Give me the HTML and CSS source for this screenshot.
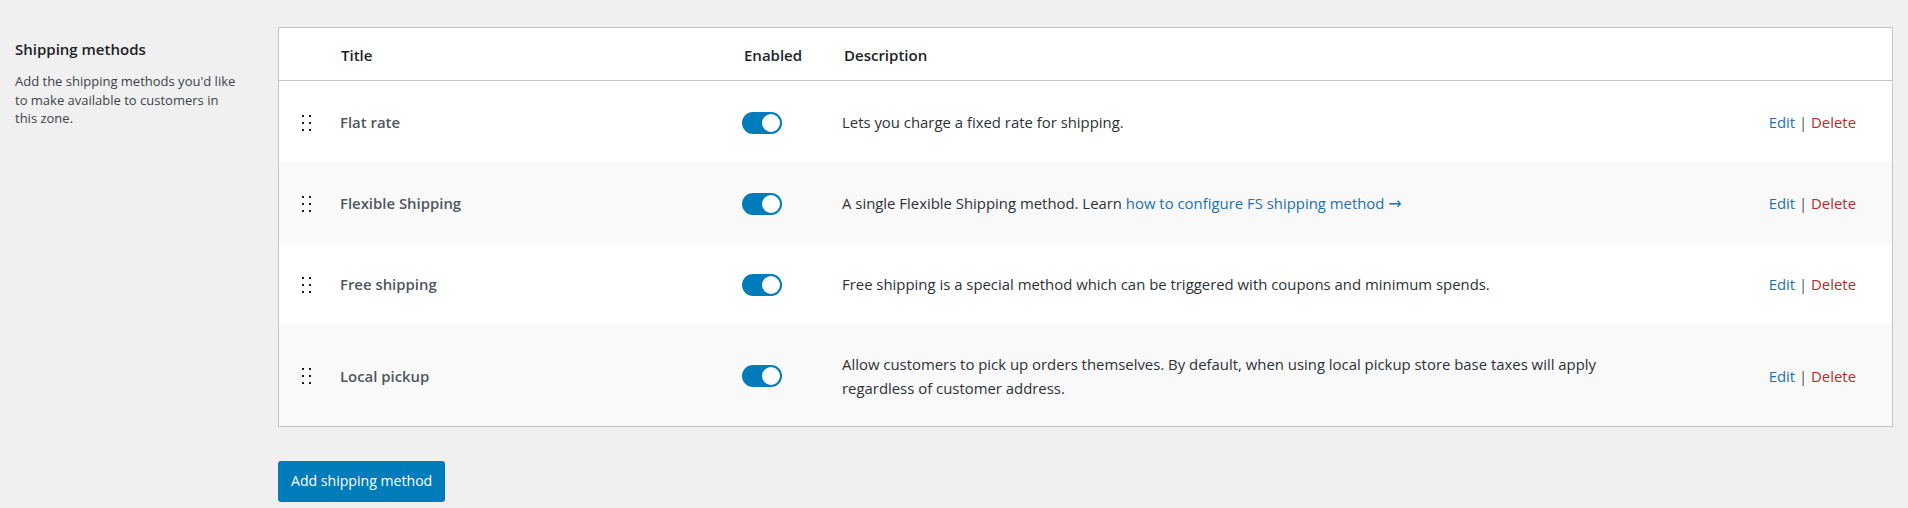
FILE: index.html
```html
<!DOCTYPE html>
<html lang="en">
<head>
<meta charset="utf-8">
<title>Shipping methods</title>
<link rel="stylesheet" href="styles.css">
</head>
<body>
<div class="page">
  <aside class="side">
    <h2 class="side-title">Shipping methods</h2>
    <p class="side-desc">Add the shipping methods you'd like to make available to customers in this zone.</p>
  </aside>
  <main class="content">
    <div class="methods">
      <div class="row head">
        <div class="c-handle"></div>
        <div class="c-title">Title</div>
        <div class="c-enabled">Enabled</div>
        <div class="c-desc">Description</div>
        <div class="c-actions"></div>
      </div>
      <div class="row">
        <div class="c-handle"><svg class="drag" width="9" height="16" viewBox="0 0 9 16"><rect x="0" y="0" width="2" height="2"/><rect x="7" y="0" width="2" height="2"/><rect x="0" y="7" width="2" height="2"/><rect x="7" y="7" width="2" height="2"/><rect x="0" y="14" width="2" height="2"/><rect x="7" y="14" width="2" height="2"/></svg></div>
        <div class="c-title">Flat rate</div>
        <div class="c-enabled"><span class="toggle"></span></div>
        <div class="c-desc">Lets you charge a fixed rate for shipping.</div>
        <div class="c-actions"><a class="edit" href="#">Edit</a> | <a class="delete" href="#">Delete</a></div>
      </div>
      <div class="row alt">
        <div class="c-handle"><svg class="drag" width="9" height="16" viewBox="0 0 9 16"><rect x="0" y="0" width="2" height="2"/><rect x="7" y="0" width="2" height="2"/><rect x="0" y="7" width="2" height="2"/><rect x="7" y="7" width="2" height="2"/><rect x="0" y="14" width="2" height="2"/><rect x="7" y="14" width="2" height="2"/></svg></div>
        <div class="c-title">Flexible Shipping</div>
        <div class="c-enabled"><span class="toggle"></span></div>
        <div class="c-desc">A single Flexible Shipping method. Learn <a class="link" href="#">how to configure FS shipping method <span class="arrow">→</span></a></div>
        <div class="c-actions"><a class="edit" href="#">Edit</a> | <a class="delete" href="#">Delete</a></div>
      </div>
      <div class="row">
        <div class="c-handle"><svg class="drag" width="9" height="16" viewBox="0 0 9 16"><rect x="0" y="0" width="2" height="2"/><rect x="7" y="0" width="2" height="2"/><rect x="0" y="7" width="2" height="2"/><rect x="7" y="7" width="2" height="2"/><rect x="0" y="14" width="2" height="2"/><rect x="7" y="14" width="2" height="2"/></svg></div>
        <div class="c-title">Free shipping</div>
        <div class="c-enabled"><span class="toggle"></span></div>
        <div class="c-desc">Free shipping is a special method which can be triggered with coupons and minimum spends.</div>
        <div class="c-actions"><a class="edit" href="#">Edit</a> | <a class="delete" href="#">Delete</a></div>
      </div>
      <div class="row alt">
        <div class="c-handle"><svg class="drag" width="9" height="16" viewBox="0 0 9 16"><rect x="0" y="0" width="2" height="2"/><rect x="7" y="0" width="2" height="2"/><rect x="0" y="7" width="2" height="2"/><rect x="7" y="7" width="2" height="2"/><rect x="0" y="14" width="2" height="2"/><rect x="7" y="14" width="2" height="2"/></svg></div>
        <div class="c-title">Local pickup</div>
        <div class="c-enabled"><span class="toggle"></span></div>
        <div class="c-desc">Allow customers to pick up orders themselves. By default, when using local pickup store base taxes will apply regardless of customer address.</div>
        <div class="c-actions"><a class="edit" href="#">Edit</a> | <a class="delete" href="#">Delete</a></div>
      </div>
    </div>
    <button class="add-btn" type="button">Add shipping method</button>
  </main>
</div>
</body>
</html>
```

FILE: styles.css
```css
* { box-sizing: border-box; }

html, body {
  margin: 0;
  padding: 0;
  background: #f0f0f0;
  font-family: "Open Sans", "Noto Sans", sans-serif;
  color: #1d2327;
}

.page {
  display: flex;
  padding: 27px 15px 0 15px;
  min-height: 508px;
}

.side {
  width: 263px;
  flex: none;
}

.side-title {
  margin: 11.5px 0 0 0;
  font-size: 15px;
  line-height: 20px;
  font-weight: 600;
  color: #1d2327;
}

.side-desc {
  margin: 13.5px 0 0 0;
  width: 223px;
  font-size: 13px;
  line-height: 18.7px;
  color: #3c434a;
}

.content {
  flex: 1;
  min-width: 0;
}

.methods {
  background: #fff;
  border: 1px solid #c3c4c7;
}

.row {
  display: grid;
  grid-template-columns: 61px 402px 100px 1fr auto;
  align-items: center;
  min-height: 81px;
  padding: 27.5px 0 25.5px 0;
  font-size: 14.9px;
  line-height: 24.3px;
}

.row.alt {
  background: #f9f9f9;
}

.row.head {
  min-height: 53px;
  padding: 1px 0 0 0;
  border-bottom: 1px solid #c3c4c7;
  font-size: 15px;
  line-height: 20px;
  font-weight: 600;
  color: #1d2327;
}

.row.head .c-title { padding-left: 1px; color: #1d2327; }
.row.head .c-enabled { padding-left: 2px; }
.row.head .c-desc { padding-left: 2px; color: #1d2327; }

.c-handle {
  padding-left: 23px;
  display: flex;
  align-items: center;
}

.drag {
  display: block;
  fill: #1e1e1e;
}

.row .c-title {
  font-weight: 600;
  color: #50575e;
}

.c-enabled {
  display: flex;
  align-items: center;
}

.toggle {
  position: relative;
  display: block;
  width: 40px;
  height: 22px;
  border-radius: 11px;
  background: #007cba;
  margin-top: 1px;
}

.toggle::after {
  content: "";
  position: absolute;
  top: 2px;
  right: 2px;
  width: 18px;
  height: 18px;
  border-radius: 50%;
  background: #fff;
}

.c-desc {
  max-width: 770px;
  color: #2c3338;
}

.arrow {
  font-family: "DejaVu Sans", sans-serif;
  font-size: 16px;
}

.c-actions {
  padding-right: 36px;
  color: #50575e;
  white-space: nowrap;
}

.edit, .link {
  color: #2271b1;
  text-decoration: none;
}

.delete {
  color: #b32d2e;
  text-decoration: none;
}

.add-btn {
  margin-top: 34px;
  height: 41px;
  padding: 0 13px;
  border: 0;
  border-radius: 3px;
  background: #007cba;
  color: #fff;
  font-family: "Open Sans", "Noto Sans", sans-serif;
  font-size: 14.1px;
  line-height: 20px;
  cursor: pointer;
}
```
